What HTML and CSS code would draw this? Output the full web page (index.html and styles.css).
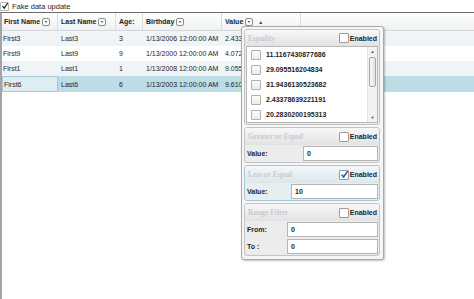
FILE: index.html
```html
<!DOCTYPE html>
<html>
<head>
<meta charset="utf-8">
<link rel="stylesheet" href="styles.css">
</head>
<body>
<div class="page">
  <div class="topbar">
    <span class="cb checked"><svg viewBox="0 0 8 8" width="8" height="8"><path d="M1.5 4.2 L3.2 6.2 L6.8 1" fill="none" stroke="#222" stroke-width="1.3"/></svg></span>
    <span class="toplabel">Fake data update</span>
  </div>
  <div class="grid">
    <div class="row head">
      <div class="cell c1">First Name<span class="dd"></span></div>
      <div class="cell c2">Last Name<span class="dd"></span></div>
      <div class="cell c3">Age:</div>
      <div class="cell c4">Birthday<span class="dd"></span></div>
      <div class="cell c5">Value<span class="dd"></span><span class="sort">▲</span></div>
      <div class="cell rest"></div>
    </div>
    <div class="row alt">
      <div class="cell c1">First3</div><div class="cell c2">Last3</div><div class="cell c3">3</div><div class="cell c4">1/13/2006 12:00:00 AM</div><div class="cell c5"><span class="clip">2.43378639221191</span></div><div class="cell rest"></div>
    </div>
    <div class="row">
      <div class="cell c1">First9</div><div class="cell c2">Last9</div><div class="cell c3">9</div><div class="cell c4">1/13/2000 12:00:00 AM</div><div class="cell c5"><span class="clip">4.07213020324707</span></div><div class="cell rest"></div>
    </div>
    <div class="row alt">
      <div class="cell c1">First1</div><div class="cell c2">Last1</div><div class="cell c3">1</div><div class="cell c4">1/13/2008 12:00:00 AM</div><div class="cell c5"><span class="clip">9.05508995056152</span></div><div class="cell rest"></div>
    </div>
    <div class="row sel">
      <div class="cell c1 cur">First6</div><div class="cell c2">Last6</div><div class="cell c3">6</div><div class="cell c4">1/13/2003 12:00:00 AM</div><div class="cell c5"><span class="clip">9.61032485961914</span></div><div class="cell rest"></div>
    </div>
  </div>

  <div class="popup">
    <div class="sec">
      <div class="sechead first"><span class="sectitle">Equality</span><span class="en"><span class="cb"></span>Enabled</span></div>
      <div class="listbox">
        <div class="items">
          <div class="item"><span class="cb"></span>11.1167430877686</div>
          <div class="item"><span class="cb"></span>29.095516204834</div>
          <div class="item"><span class="cb"></span>31.9436130523682</div>
          <div class="item"><span class="cb"></span>2.43378639221191</div>
          <div class="item"><span class="cb"></span>20.2830200195313</div>
        </div>
        <div class="sbar">
          <span class="arr">▲</span>
          <span class="thumb"></span>
          <span class="arr">▼</span>
        </div>
      </div>
    </div>
    <div class="sec">
      <div class="sechead"><span class="sectitle">Greater or Equal</span><span class="en"><span class="cb"></span>Enabled</span></div>
      <div class="field"><span class="flabel w56">Value:</span><span class="input">0</span></div>
    </div>
    <div class="sec active">
      <div class="sechead"><span class="sectitle">Less or Equal</span><span class="en"><span class="cb checked"><svg viewBox="0 0 8 8" width="9" height="9"><path d="M1.5 4.2 L3.2 6.2 L6.8 1" fill="none" stroke="#1f5fa0" stroke-width="1.4"/></svg></span>Enabled</span></div>
      <div class="field"><span class="flabel w44">Value:</span><span class="input">10</span></div>
    </div>
    <div class="sec">
      <div class="sechead"><span class="sectitle">Range Filter</span><span class="en"><span class="cb"></span>Enabled</span></div>
      <div class="field"><span class="flabel w40">From:</span><span class="input">0</span></div>
      <div class="field"><span class="flabel w40">To :</span><span class="input">0</span></div>
    </div>
  </div>
</div>
</body>
</html>
```
FILE: styles.css
```css
html, body {
  margin: 0;
  padding: 0;
  background: #fff;
}
.page {
  position: relative;
  width: 474px;
  height: 299px;
  overflow: hidden;
  font-family: "Liberation Sans", Arial, sans-serif;
  font-size: 7px;
  color: #1e1e1e;
}
.topbar {
  height: 12px;
  display: flex;
  align-items: center;
  gap: 3px;
}
.cb {
  display: inline-block;
  box-sizing: border-box;
  width: 9px;
  height: 9px;
  border: 1px solid #9a9a9a;
  border-radius: 1px;
  background: linear-gradient(#f4f4f4, #e2e2e2);
  flex: none;
  position: relative;
}
.cb svg {
  position: absolute;
  left: 0;
  top: -1px;
}
.topbar .cb {
  border-color: #bbb;
  background: #fff;
}
.toplabel {
  font-size: 7.5px;
}
.grid {
  border-top: 1px solid #6a6a6a;
  border-left: 2px solid #a4a4a4;
  height: 287px;
  box-sizing: border-box;
}
.row {
  display: flex;
  height: 15px;
}
.row.head {
  height: 17px;
  background: linear-gradient(#ffffff, #eef0f2);
  border-bottom: 1px solid #d4d8dc;
  font-weight: bold;
}
.cell {
  box-sizing: border-box;
  display: flex;
  align-items: center;
  padding-left: 3px;
  white-space: nowrap;
  overflow: hidden;
  flex: none;
}
.head .cell {
  border-right: 1px solid #dcdcdc;
}
.head .c1 { padding-left: 2px; }
.c1 { width: 56px; padding-left: 1px; }
.c2 { width: 58px; }
.c3 { width: 27px; }
.c4 { width: 79px; }
.c5 { width: 79px; }
.rest { flex: 1; }
.head .rest { border-right: none; }
.clip {
  display: block;
  width: 18px;
  overflow: hidden;
  white-space: nowrap;
}
.row.alt { background: #f1f4f6; }
.row.sel { background: #bcdce6; height: 16px; }
.cur {
  background: #dcedf3;
  border: 1px solid #a6c9d6;
}
.dd {
  display: inline-block;
  box-sizing: border-box;
  width: 8px;
  height: 8px;
  margin-left: 2px;
  border: 1px solid #8c8c8c;
  border-radius: 2px;
  background: #fafafa;
  position: relative;
}
.dd::after {
  content: "";
  position: absolute;
  left: 1.5px;
  top: 2px;
  border-left: 1.5px solid transparent;
  border-right: 1.5px solid transparent;
  border-top: 2px solid #333;
}
.sort {
  font-size: 5px;
  margin-left: 5px;
  color: #444;
}
.popup {
  position: absolute;
  left: 241px;
  top: 26px;
  width: 143px;
  box-sizing: border-box;
  padding: 2px 3px 3px 2px;
  background: #f6f6f6;
  border: 1px solid #a8a8a8;
  border-radius: 3px;
  box-shadow: 1px 1px 2px rgba(0,0,0,0.25);
  display: flex;
  flex-direction: column;
  gap: 2px;
}
.sec {
  border: 1px solid #c4c4c4;
  border-radius: 3px;
  background: #ececec;
  overflow: hidden;
}
.sec.active {
  border-color: #a9c6d6;
  background: #e6eef2;
}
.sechead {
  height: 17px;
  display: flex;
  align-items: center;
  justify-content: space-between;
  padding: 0 2px 0 3px;
  background: linear-gradient(#f8f8f8, #e2e2e2);
}
.sechead.first { height: 16px; }
.sec.active .sechead {
  background: linear-gradient(#f3f7f9, #dce7ec);
}
.sectitle {
  font-family: "Liberation Serif", "Times New Roman", serif;
  font-weight: bold;
  color: #cacaca;
  font-size: 7.5px;
}
.en {
  display: flex;
  align-items: center;
  gap: 1px;
  font-weight: bold;
}
.en .cb {
  width: 10px;
  height: 10px;
  background: #fff;
}
.listbox {
  display: flex;
  background: #fff;
  border: 1px solid #b8b8b8;
  margin: 0 1px 1px 1px;
  height: 75px;
}
.items {
  flex: 1;
  padding-left: 4px;
  display: flex;
  flex-direction: column;
}
.item {
  height: 16px;
  display: flex;
  align-items: center;
  gap: 5px;
  font-weight: bold;
}
.item .cb {
  width: 10px;
  height: 10px;
  border-color: #b0b0b0;
  background: linear-gradient(#fbfbfb, #ebebeb);
}
.sbar {
  width: 9px;
  display: flex;
  flex-direction: column;
  align-items: center;
  background: #f2f2f2;
  border-left: 1px solid #e4e4e4;
}
.arr {
  font-size: 4px;
  height: 9px;
  line-height: 9px;
  color: #444;
}
.thumb {
  display: block;
  width: 7px;
  height: 30px;
  box-sizing: border-box;
  border: 1px solid #a8a8a8;
  border-radius: 2px;
  background: linear-gradient(90deg, #fafafa, #e0e0e0);
  margin-top: 1px;
}
.sbar .arr:last-child { margin-top: auto; }
.field {
  display: flex;
  align-items: center;
  height: 17px;
  padding: 0 1px 0 2px;
}
.flabel {
  font-weight: bold;
  flex: none;
}
.w56 { width: 56px; }
.w44 { width: 44px; }
.w40 { width: 40px; }
.input {
  flex: 1;
  height: 15px;
  box-sizing: border-box;
  border: 1px solid #b4b4b4;
  background: #fff;
  display: flex;
  align-items: center;
  padding-left: 3px;
  font-weight: bold;
}
```
